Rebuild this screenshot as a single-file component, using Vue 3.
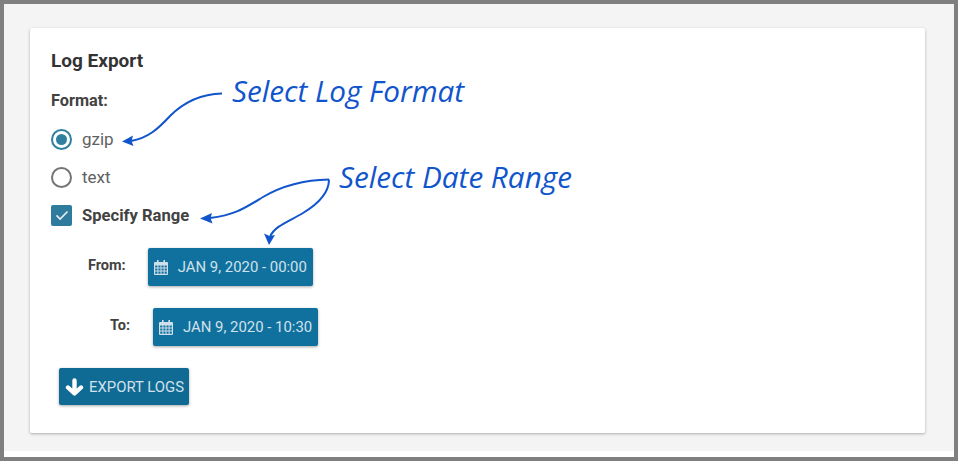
<template>
  <div class="frame">
    <div class="page">
      <section class="card">
        <h2 class="title">Log Export</h2>
        <div class="format-label">Format:</div>

        <label class="option">
          <span class="radio checked"><span class="dot"></span></span>
          <span class="option-text">gzip</span>
        </label>
        <label class="option">
          <span class="radio"></span>
          <span class="option-text">text</span>
        </label>
        <label class="option range">
          <span class="checkbox">
            <svg width="20" height="20" viewBox="0 0 20 20">
              <path d="M4.500 10.400l3.600 3.600L15.500 6.500" fill="none" stroke="#e4eef3" stroke-width="1.700" />
            </svg>
          </span>
          <span class="range-text">Specify Range</span>
        </label>

        <div v-for="row in dateRows" :key="row.label" class="date-row" :class="row.cls">
          <span class="date-label">{{ row.label }}</span>
          <button class="date-btn">
            <svg class="cal" width="14" height="15" viewBox="0 0 14 15">
              <path fill="#cfe0ea" fill-rule="evenodd" d="M3 0h1.600v2h4.800V0H11v2h2a1 1 0 0 1 1 1v11a1 1 0 0 1-1 1H1a1 1 0 0 1-1-1V3a1 1 0 0 1 1-1h2V0zM1.200 5.600v2h2.200v-2H1.200zm3.200 0v2h2.100v-2H4.400zm3.100 0v2h2.100v-2H7.500zm3.100 0v2h2.200v-2h-2.200zM1.200 8.500v2h2.200v-2H1.200zm3.200 0v2h2.100v-2H4.400zm3.100 0v2h2.100v-2H7.500zm3.100 0v2h2.200v-2h-2.200zM1.200 11.400v2.300h2.200v-2.300H1.200zm3.200 0v2.300h2.100v-2.300H4.400zm3.100 0v2.300h2.100v-2.300H7.500zm3.100 0v2.300h2.200v-2.300h-2.200z" />
            </svg>
            {{ row.value }}
          </button>
        </div>

        <button class="export-btn">
          <svg width="19" height="18" viewBox="0 0 19 18">
            <path d="M9.500 2.500v12.500M3 9.500l6.500 6 6.500-6" fill="none" stroke="#fff" stroke-width="4.400" stroke-linecap="round" stroke-linejoin="round" />
          </svg>
          EXPORT LOGS
        </button>
      </section>
    </div>

    <!-- callouts drawn over the screenshot -->
    <svg class="arrows" width="958" height="461" viewBox="0 0 958 461">
      <g fill="none" stroke="#1155cc" stroke-width="2">
        <path d="M222 93.500C200 94 182 104 170 116C158 129 148 138 131 141" />
        <path d="M329 179.500C300 180 280 187 263 197C245 208 235 215 210 218" />
        <path d="M329 179.500C329 192 318 204 303 213C290 221 274 226 270 237" />
      </g>
      <g fill="#1155cc">
        <path d="M122 141.500l11-6-1.500 5.500 2 5z" />
        <path d="M200 218.500l12-5.500-1.500 5 2 5.500z" />
        <path d="M269 245l-5-11.500 5.500 2.500 5.500-1z" />
      </g>
    </svg>
    <span class="note note-format">Select Log Format</span>
    <span class="note note-range">Select Date Range</span>
  </div>
</template>

<script setup>
const dateRows = [
  { label: 'From:', value: 'JAN 9, 2020 - 00:00', cls: 'from' },
  { label: 'To:', value: 'JAN 9, 2020 - 10:30', cls: 'to' }
]
</script>

<style scoped>
.frame {
  position: relative;
  width: 958px;
  height: 461px;
  box-sizing: border-box;
  border: 4px solid #7f7f7f;
  background: #fff;
  font-family: Roboto, "Liberation Sans", sans-serif;
  overflow: hidden;
}

.page {
  height: 447px;
  box-sizing: border-box;
  padding: 24px 29px 0 26px;
  background: #f4f4f4;
}

.card {
  height: 405px;
  box-sizing: border-box;
  padding: 21px 0 0 21px;
  background: #fff;
  border-radius: 2px;
  box-shadow: 0 1px 3px rgba(0, 0, 0, 0.3);
}

.title {
  margin: 0;
  font-size: 19px;
  line-height: 24px;
  font-weight: 700;
  color: #333;
}

.format-label {
  margin-top: 18px;
  font-size: 16.300px;
  line-height: 20px;
  font-weight: 700;
  color: #424242;
}

.option {
  display: flex;
  align-items: center;
  height: 38px;
  gap: 10px;
}

.option:first-of-type {
  margin-top: 9px;
}

.radio {
  display: flex;
  align-items: center;
  justify-content: center;
  width: 21px;
  height: 21px;
  box-sizing: border-box;
  border: 2px solid #757575;
  border-radius: 50%;
}

.radio.checked {
  border-color: #2f7f9f;
}

.dot {
  width: 11px;
  height: 11px;
  border-radius: 50%;
  background: #2f7f9f;
}

.option-text {
  font-size: 17px;
  color: #616161;
}

.checkbox {
  display: flex;
  width: 21px;
  height: 21px;
  background: #2f7b9e;
  border-radius: 2px;
  align-items: center;
  justify-content: center;
}

.range-text {
  font-size: 16.600px;
  font-weight: 700;
  color: #424242;
}

.date-row {
  display: flex;
  align-items: center;
  height: 38px;
}

.date-row.from {
  margin-top: 14px;
  padding-left: 37px;
  gap: 22px;
}

.date-row.to {
  margin-top: 22px;
  padding-left: 59px;
  gap: 23px;
}

.date-label {
  font-size: 14.500px;
  font-weight: 700;
  color: #424242;
  position: relative;
  top: -2px;
}

.date-btn,
.export-btn {
  display: flex;
  align-items: center;
  border: 0;
  border-radius: 2px;
  font-family: inherit;
  color: #d2e1ea;
  background: #10719f;
  box-shadow: 0 1px 3px rgba(0, 0, 0, 0.35);
}

.date-btn {
  width: 165px;
  height: 38px;
  padding: 0 0 0 6px;
  gap: 10px;
  font-size: 14.900px;
  white-space: nowrap;
}

.export-btn {
  width: 130px;
  height: 37px;
  margin: 22px 0 0 8px;
  padding: 0 0 0 6px;
  gap: 5px;
  font-size: 14.900px;
  white-space: nowrap;
  background: #0f6a94;
}

.arrows {
  position: absolute;
  left: -4px;
  top: -4px;
  pointer-events: none;
}

.note {
  position: absolute;
  font-family: "Open Sans", "Noto Sans", sans-serif;
  font-style: italic;
  font-size: 29.700px;
  line-height: 34px;
  color: #1155cc;
  white-space: nowrap;
}

.note-format {
  left: 228px;
  top: 70px;
}

.note-range {
  left: 335px;
  top: 156px;
}
</style>
